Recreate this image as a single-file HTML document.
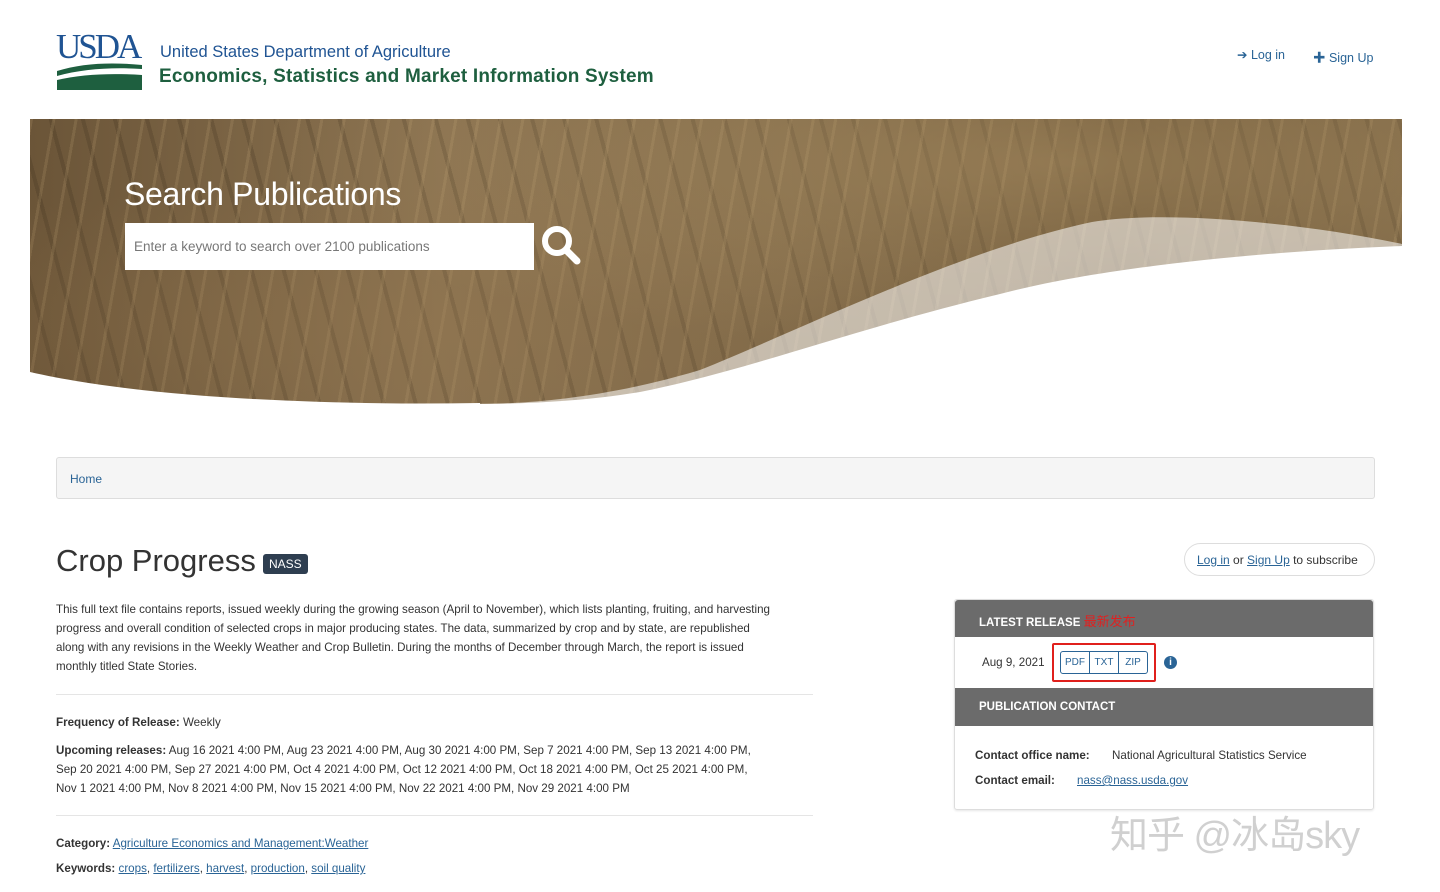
<!DOCTYPE html>
<html><head><meta charset="utf-8"><style>
*{margin:0;padding:0;box-sizing:border-box}
body{width:1440px;height:892px;overflow:hidden;background:#fff;font-family:"Liberation Sans","Noto Sans CJK SC",sans-serif;color:#333;position:relative}
.a{position:absolute}
a{color:#2a6496}
.hero{left:30px;top:119px;width:1372px;height:290px;background:
radial-gradient(ellipse at 75% 15%,rgba(190,160,110,.45),transparent 55%),
radial-gradient(ellipse at 30% 70%,rgba(150,120,80,.35),transparent 50%),
repeating-linear-gradient(100deg,rgba(210,180,130,.16) 0 3px,transparent 3px 22px),
repeating-linear-gradient(75deg,rgba(50,38,22,.2) 0 4px,transparent 4px 31px),
linear-gradient(90deg,#6b5538 0%,#8a7250 30%,#7e6848 55%,#6a5538 80%,#7a6444 100%);}
.small{font-size:11.6px}
</style></head><body>
<div class="a" style="left:56px;top:29px;font-family:'Liberation Serif',serif;font-size:35px;color:#205493;letter-spacing:-3px;line-height:36px">USDA</div>
<svg class="a" style="left:57px;top:63px" width="85" height="27"><path d="M0,8 C25,0 55,-1 85,2 V6 C55,4 25,6 0,13Z" fill="#1e5f3f"/><path d="M0,17 C25,11 55,10 85,12 V27 H0Z" fill="#1e5f3f"/></svg>
<div class="a" style="left:160px;top:43px;font-size:16.5px;color:#205493">United States Department of Agriculture</div>
<div class="a" style="left:159px;top:66px;font-size:19px;font-weight:bold;color:#1e5f3f;letter-spacing:.2px">Economics, Statistics and Market Information System</div>
<div class="a" style="left:1237px;top:47px;font-size:12.5px;color:#2a6496">➔ Log in</div>
<div class="a" style="left:1313px;top:47px;font-size:12.5px;color:#2a6496">✚ Sign Up</div>
<div class="a hero"></div>
<svg class="a" style="left:0;top:0" width="1440" height="420">
<path d="M1402,244 C1300,222 1160,210 1092,222 C960,250 800,330 700,370 C600,400 520,404 472,404 L1402,404Z" fill="rgba(255,255,255,.55)"/>
<path d="M1402,246 C1250,252 1100,268 1000,294 C850,330 750,370 640,392 C580,402 520,404 472,404 L1402,420Z" fill="#fff"/>
<path d="M30,372 C130,395 300,406 480,403 L480,420 L30,420Z" fill="#fff"/>
<rect x="0" y="404" width="1440" height="20" fill="#fff"/>
</svg>
<div class="a" style="left:124px;top:176px;font-size:32px;color:#fff;letter-spacing:-.3px">Search Publications</div>
<div class="a" style="left:125px;top:223px;width:409px;height:47px;background:#fff;font-size:13.5px;color:#777;padding:16px 9px">Enter a keyword to search over 2100 publications</div>
<svg class="a" style="left:540px;top:224px" width="42" height="42"><circle cx="17" cy="17" r="12" fill="none" stroke="#fff" stroke-width="6"/><path d="M26,26 L37,37" stroke="#fff" stroke-width="7" stroke-linecap="round"/></svg>
<div class="a" style="left:56px;top:457px;width:1319px;height:42px;border:1px solid #ddd;background:#f5f5f5;border-radius:3px;font-size:12px;color:#2a6496;padding:14px 13px">Home</div>
<div class="a" style="left:56px;top:543px;font-size:31px;color:#333">Crop Progress</div>
<div class="a" style="left:263px;top:554px;background:#2e3e50;color:#fff;font-size:12px;padding:3px 6px;border-radius:3px">NASS</div>
<div class="a small" style="left:56px;top:600px;width:720px;line-height:19px">This full text file contains reports, issued weekly during the growing season (April to November), which lists planting, fruiting, and harvesting progress and overall condition of selected crops in major producing states. The data, summarized by crop and by state, are republished along with any revisions in the Weekly Weather and Crop Bulletin. During the months of December through March, the report is issued monthly titled State Stories.</div>
<div class="a" style="left:56px;top:694px;width:757px;border-top:1px solid #e5e5e5"></div>
<div class="a small" style="left:56px;top:716px"><b>Frequency of Release:</b> Weekly</div>
<div class="a small" style="left:56px;top:741px;width:705px;line-height:19px"><b>Upcoming releases:</b> Aug 16 2021 4:00 PM, Aug 23 2021 4:00 PM, Aug 30 2021 4:00 PM, Sep 7 2021 4:00 PM, Sep 13 2021 4:00 PM, Sep 20 2021 4:00 PM, Sep 27 2021 4:00 PM, Oct 4 2021 4:00 PM, Oct 12 2021 4:00 PM, Oct 18 2021 4:00 PM, Oct 25 2021 4:00 PM, Nov 1 2021 4:00 PM, Nov 8 2021 4:00 PM, Nov 15 2021 4:00 PM, Nov 22 2021 4:00 PM, Nov 29 2021 4:00 PM</div>
<div class="a" style="left:56px;top:815px;width:757px;border-top:1px solid #e5e5e5"></div>
<div class="a small" style="left:56px;top:837px"><b>Category:</b> <a href="#">Agriculture Economics and Management:Weather</a></div>
<div class="a small" style="left:56px;top:862px"><b>Keywords:</b> <a href="#">crops</a>, <a href="#">fertilizers</a>, <a href="#">harvest</a>, <a href="#">production</a>, <a href="#">soil quality</a></div>
<div class="a" style="left:1184px;top:543px;width:191px;height:33px;border:1px solid #ddd;border-radius:17px;padding:9px 0 0 12px;font-size:12px;white-space:nowrap"><a href="#">Log in</a> or <a href="#">Sign Up</a> to subscribe</div>
<div class="a" style="left:954px;top:599px;width:420px;height:211px;border:1px solid #ddd;border-radius:3px;box-shadow:0 1px 2px rgba(0,0,0,.1)"></div>
<div class="a" style="left:955px;top:600px;width:418px;height:37px;background:#6b6b6b;border-radius:3px 3px 0 0;color:#fff;font-size:11.5px;font-weight:bold;padding:11px 24px;white-space:nowrap">LATEST RELEASE <span style="color:#e02020;font-weight:normal;font-size:13px">最新发布</span></div>
<div class="a small" style="left:982px;top:656px">Aug 9, 2021</div>
<div class="a" style="left:1052px;top:643px;width:104px;height:39px;border:2px solid #e0201c;border-radius:2px"></div>
<div class="a" style="left:1060px;top:651px;width:88px;height:23px;border:1px solid #2a6496;border-radius:3px;display:flex;font-size:10px;color:#2a6496">
<div style="flex:1;text-align:center;line-height:21px;border-right:1px solid #2a6496">PDF</div><div style="flex:1;text-align:center;line-height:21px;border-right:1px solid #2a6496">TXT</div><div style="flex:1;text-align:center;line-height:21px">ZIP</div></div>
<div class="a" style="left:1164px;top:656px;width:13px;height:13px;border-radius:50%;background:#2a6496;color:#fff;font-size:10px;font-weight:bold;text-align:center;line-height:13px">i</div>
<div class="a" style="left:955px;top:688px;width:418px;height:38px;background:#6b6b6b;color:#fff;font-size:11.5px;font-weight:bold;padding:13px 24px">PUBLICATION CONTACT</div>
<div class="a small" style="left:975px;top:749px"><b>Contact office name:</b></div>
<div class="a small" style="left:1112px;top:749px">National Agricultural Statistics Service</div>
<div class="a small" style="left:975px;top:774px"><b>Contact email:</b></div>
<div class="a small" style="left:1077px;top:774px"><a href="#">nass@nass.usda.gov</a></div>
<div class="a" style="left:1110px;top:804px;font-size:38px;color:rgba(120,120,120,.35);letter-spacing:-1px">知乎 @冰岛sky</div>
</body></html>
